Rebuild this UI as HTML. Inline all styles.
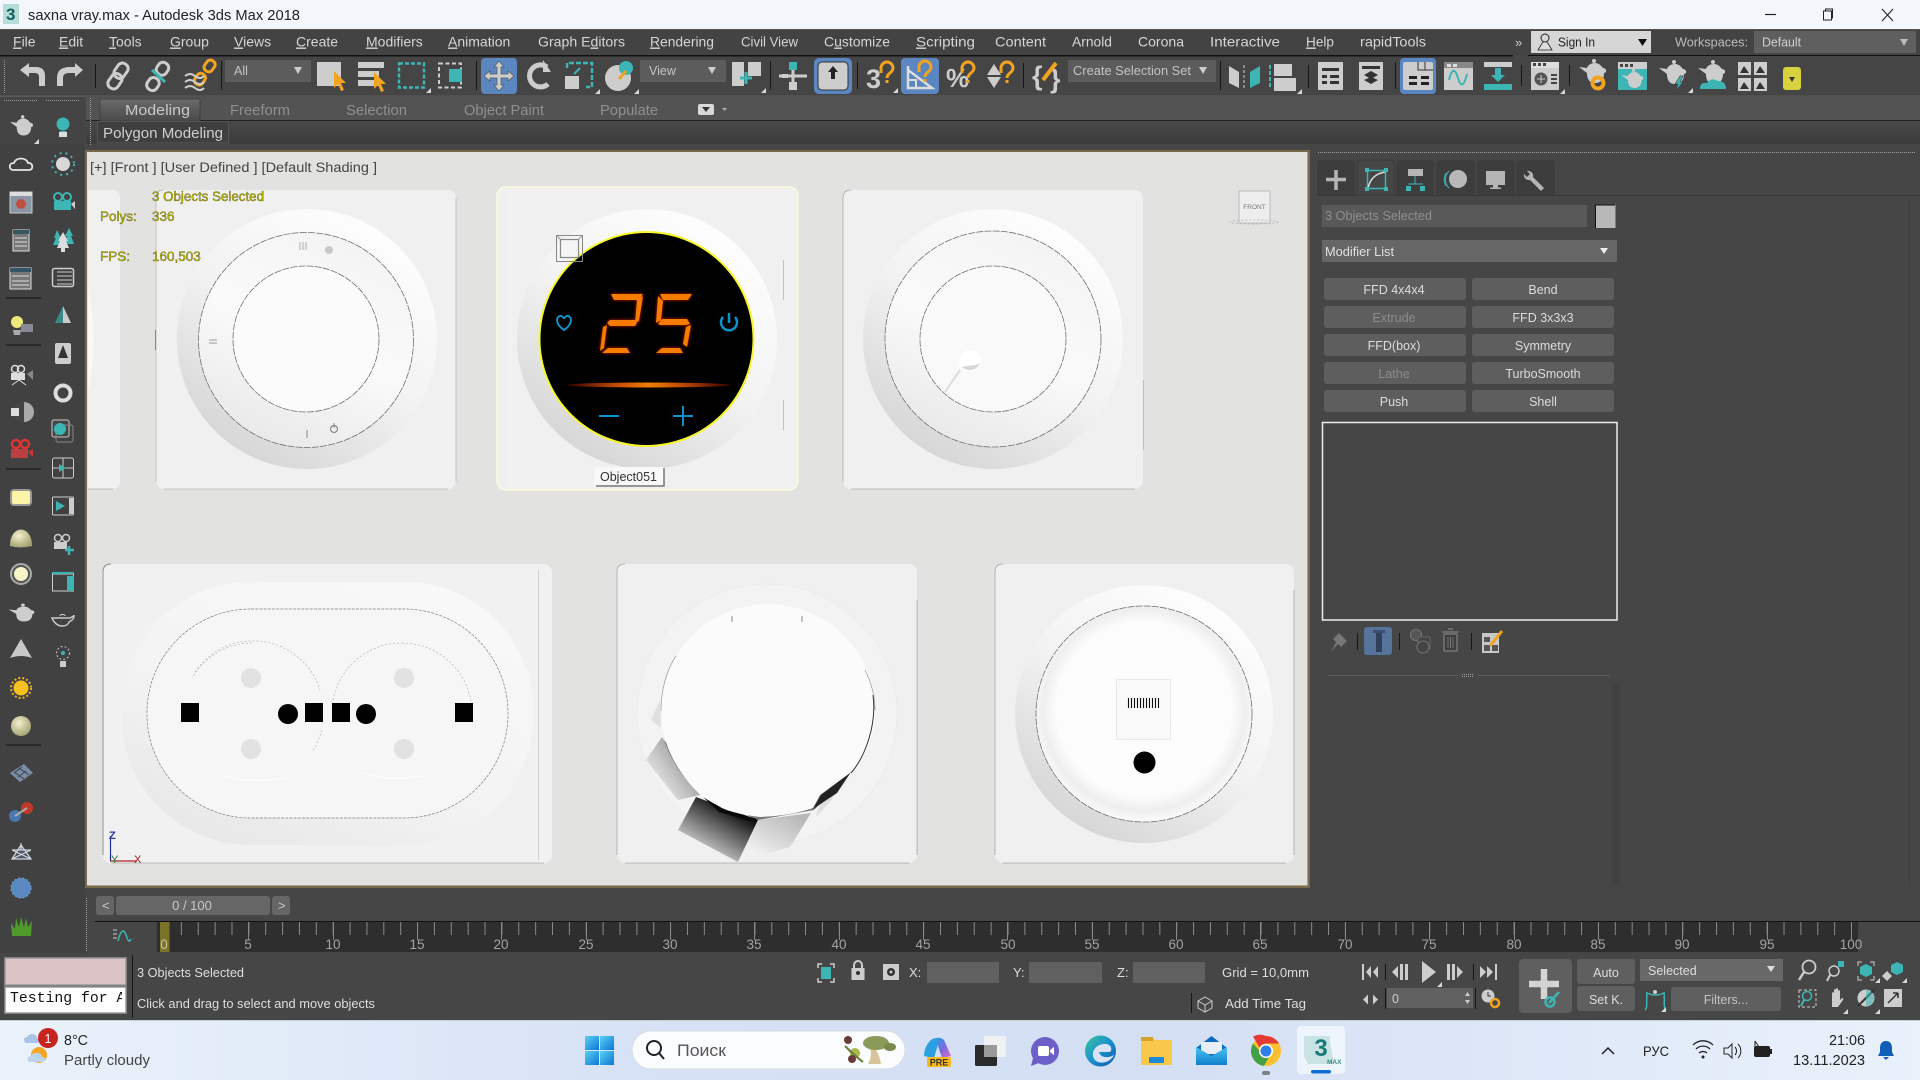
<!DOCTYPE html>
<html lang="en"><head><meta charset="utf-8"><title>saxna vray.max - Autodesk 3ds Max 2018</title>
<style>
html,body{margin:0;padding:0;background:#464646;width:1920px;height:1080px;overflow:hidden}
svg{display:block}
text{font-family:"Liberation Sans","Noto Sans CJK SC",sans-serif;white-space:pre}
.m{font-size:14px;fill:#d6d6d6}
.t{font-size:14.5px;fill:#8f8f8f}
.d{font-size:12.5px;fill:#c4c4c4}
.b{font-size:12.5px;fill:#dcdcdc;text-anchor:middle}
.s{font-size:13px;fill:#dedede}
.k{font-size:13.5px;fill:#a4a4a4;text-anchor:middle}
.st{font-size:13.5px;fill:#c6c600;stroke:#47470a;stroke-width:.35px}
.tb{font-size:14.5px;fill:#333}
.ic{fill:#cdcdcd}.te{fill:#3db5b5}.or{fill:#f2a31f}
.l{fill:none;stroke:#cdcdcd}
.lt{fill:none;stroke:#3db5b5}
.rim{fill:none;stroke:#707070;stroke-width:.8;stroke-dasharray:7 1.200}
.sep{stroke:#161616;stroke-width:1}
</style></head><body>
<svg width="1920" height="1080" viewBox="0 0 1920 1080" xmlns="http://www.w3.org/2000/svg">
<defs>
<linearGradient id="tab" x1="0" y1="0" x2="0" y2="1"><stop offset="0" stop-color="#6a6a6a"/><stop offset="1" stop-color="#4a4a4a"/></linearGradient>
<linearGradient id="rib" x1="0" y1="0" x2="0" y2="1"><stop offset="0" stop-color="#494949"/><stop offset="1" stop-color="#3b3b3b"/></linearGradient>
<linearGradient id="halo" x1=".8" y1=".1" x2=".25" y2=".95"><stop offset="0" stop-color="#fdfdfd"/><stop offset=".5" stop-color="#f2f2f2"/><stop offset="1" stop-color="#d6d6d6"/></linearGradient>
<linearGradient id="halo2" x1=".8" y1=".1" x2=".25" y2=".95"><stop offset="0" stop-color="#f8f8f8"/><stop offset=".6" stop-color="#f3f3f3"/><stop offset="1" stop-color="#e9e9e9"/></linearGradient>
<linearGradient id="knob" x1=".7" y1=".05" x2=".3" y2=".95"><stop offset="0" stop-color="#f4f4f4"/><stop offset=".5" stop-color="#fafafa"/><stop offset="1" stop-color="#eaeaea"/></linearGradient>
<radialGradient id="dish" cx=".5" cy=".48" r=".52"><stop offset="0" stop-color="#fdfdfd"/><stop offset=".78" stop-color="#fcfcfc"/><stop offset=".9" stop-color="#eeeeee"/><stop offset="1" stop-color="#fbfbfb"/></radialGradient>
<linearGradient id="sh1" gradientUnits="userSpaceOnUse" x1="735" y1="806" x2="703" y2="862"><stop offset="0" stop-color="#000"/><stop offset=".3" stop-color="#4a4a4a"/><stop offset="1" stop-color="#f0f0f0"/></linearGradient>
<linearGradient id="sh2" gradientUnits="userSpaceOnUse" x1="790" y1="812" x2="765" y2="858"><stop offset="0" stop-color="#b8b8b8"/><stop offset="1" stop-color="#f0f0f0"/></linearGradient>
<linearGradient id="sh3" gradientUnits="userSpaceOnUse" x1="680" y1="760" x2="648" y2="782"><stop offset="0" stop-color="#a8a8a8"/><stop offset="1" stop-color="#f0f0f0"/></linearGradient>
<linearGradient id="bar" x1="0" y1="0" x2="1" y2="0"><stop offset="0" stop-color="#300"/><stop offset=".3" stop-color="#c04a00"/><stop offset=".5" stop-color="#f08000"/><stop offset=".7" stop-color="#c04a00"/><stop offset="1" stop-color="#300"/></linearGradient>
<linearGradient id="task" x1="0" y1="0" x2="1" y2="0"><stop offset="0" stop-color="#eaf2fb"/><stop offset=".35" stop-color="#d6e1f5"/><stop offset=".6" stop-color="#d4dff4"/><stop offset="1" stop-color="#e9f1fb"/></linearGradient>
<linearGradient id="edge" x1="0" y1="0" x2="1" y2="1"><stop offset="0" stop-color="#3cc89a"/><stop offset=".5" stop-color="#1a90d0"/><stop offset="1" stop-color="#0d5aa8"/></linearGradient>
<linearGradient id="mail" x1="0" y1="0" x2="0" y2="1"><stop offset="0" stop-color="#4cc2ee"/><stop offset="1" stop-color="#0f7fd0"/></linearGradient>
<linearGradient id="win" x1="0" y1="0" x2="1" y2="1"><stop offset="0" stop-color="#5cd0f4"/><stop offset="1" stop-color="#0a78d4"/></linearGradient>
<linearGradient id="cop" x1="0" y1="0" x2="1" y2="1"><stop offset="0" stop-color="#2aa0e0"/><stop offset=".5" stop-color="#7a6ae0"/><stop offset="1" stop-color="#e070c8"/></linearGradient>
<radialGradient id="ball" cx=".4" cy=".35" r=".7"><stop offset="0" stop-color="#f3f0cc"/><stop offset="1" stop-color="#a0a070"/></radialGradient>
<pattern id="ticks" x="164" y="922" width="16.87" height="30" patternUnits="userSpaceOnUse"><line x1=".5" y1="0" x2=".5" y2="13" stroke="#8a8a8a"/></pattern>
<pattern id="dot" width="2" height="2" patternUnits="userSpaceOnUse"><rect width="1" height="1" fill="#a0a0a0"/></pattern>
<filter id="glow" x="-20%" y="-20%" width="140%" height="140%"><feGaussianBlur stdDeviation="1.6"/></filter>
<clipPath id="cl"><rect x="6" y="988" width="116" height="24"/></clipPath>
<g id="cur"><path d="M0 0 L0 17 L4 13 L7 20 L10 19 L7 12 L12 12 Z" class="or"/></g>
<g id="tri"><path d="M0 5 L5 5 L5 0 Z" fill="#d8d8d8"/></g>
<g id="mag"><path d="M-6 2 V-3 A6 6 0 0 1 6 -3 C6 2 0 2 0 7" fill="none" stroke="#f2a31f" stroke-width="3"/><rect x="-1.5" y="9" width="3" height="3" class="or"/></g>
<g id="pot"><path d="M-13 -6 L-5 0 C-5 8 -1 10 3 10 C9 10 12 6 12 0 C15 0 15 -5 11 -5 L10 -6 C8 -9 5 -10 3 -10 C-1 -10 -4 -8 -5 -5 Z" class="ic"/><circle cx="2" cy="-12" r="2" class="ic"/></g>
</defs>

<!-- base -->
<rect width="1920" height="1080" fill="#464646"/>

<!-- title bar -->
<rect width="1920" height="29" fill="#f3f7fc"/>
<rect x="3" y="4" width="16" height="20" fill="#b5dcd8"/>
<text x="6" y="20" font-size="17" font-weight="bold" fill="#14605f">3</text>
<text x="28" y="20" font-size="14.5" fill="#222" textLength="272" lengthAdjust="spacingAndGlyphs">saxna vray.max - Autodesk 3ds Max 2018</text>
<path d="M1765 14.5h11" stroke="#222" stroke-width="1.2"/>
<rect x="1823.5" y="11" width="8" height="9" fill="none" stroke="#222"/><path d="M1825.5 11v-2h7v9h-1" fill="none" stroke="#222"/>
<path d="M1882 9l11 12M1893 9l-11 12" stroke="#222" stroke-width="1.1"/>

<!-- menu bar -->
<rect y="29" width="1920" height="26" fill="#434343"/>
<rect y="29" width="1920" height="1" fill="#555"/>
<rect y="55" width="1513" height="1.5" fill="#111"/>
<rect x="1528" y="55" width="392" height="1" fill="#111"/>
<g>
<text class="m" x="13" y="46.500"><tspan text-decoration="underline">F</tspan>ile</text>
<text class="m" x="59" y="46.500"><tspan text-decoration="underline">E</tspan>dit</text>
<text class="m" x="109" y="46.500"><tspan text-decoration="underline">T</tspan>ools</text>
<text class="m" x="170" y="46.500"><tspan text-decoration="underline">G</tspan>roup</text>
<text class="m" x="234" y="46.500"><tspan text-decoration="underline">V</tspan>iews</text>
<text class="m" x="296" y="46.500"><tspan text-decoration="underline">C</tspan>reate</text>
<text class="m" x="366" y="46.500"><tspan text-decoration="underline">M</tspan>odifiers</text>
<text class="m" x="448" y="46.500"><tspan text-decoration="underline">A</tspan>nimation</text>
<text class="m" x="538" y="46.500" textLength="87" lengthAdjust="spacingAndGlyphs">Graph E<tspan text-decoration="underline">d</tspan>itors</text>
<text class="m" x="650" y="46.500" textLength="64" lengthAdjust="spacingAndGlyphs"><tspan text-decoration="underline">R</tspan>endering</text>
<text class="m" x="741" y="46.500" textLength="57" lengthAdjust="spacingAndGlyphs">Civil View</text>
<text class="m" x="824" y="46.500" textLength="66" lengthAdjust="spacingAndGlyphs">C<tspan text-decoration="underline">u</tspan>stomize</text>
<text class="m" x="916" y="46.500" textLength="59" lengthAdjust="spacingAndGlyphs"><tspan text-decoration="underline">S</tspan>cripting</text>
<text class="m" x="995" y="46.500" textLength="51" lengthAdjust="spacingAndGlyphs">Content</text>
<text class="m" x="1072" y="46.500" textLength="40" lengthAdjust="spacingAndGlyphs">Arnold</text>
<text class="m" x="1138" y="46.500" textLength="46" lengthAdjust="spacingAndGlyphs">Corona</text>
<text class="m" x="1210" y="46.500" textLength="70" lengthAdjust="spacingAndGlyphs">Interactive</text>
<text class="m" x="1306" y="46.500" textLength="28" lengthAdjust="spacingAndGlyphs"><tspan text-decoration="underline">H</tspan>elp</text>
<text class="m" x="1360" y="46.500" textLength="66" lengthAdjust="spacingAndGlyphs">rapidTools</text>
</g>
<text x="1515" y="47" font-size="13" fill="#ccc">»</text>
<rect x="1531" y="31" width="120" height="22" fill="#d6d6d6"/>
<circle cx="1545" cy="38" r="4" fill="none" stroke="#222"/><path d="M1538 50h14l-3-5-2-3h-4l-2 3z" fill="#ddd" stroke="#222" stroke-width=".8"/>
<text x="1558" y="46.500" font-size="12.5" fill="#222" textLength="37" lengthAdjust="spacingAndGlyphs">Sign In</text>
<path d="M1638 39h9l-4.500 7z" fill="#111"/>
<text x="1675" y="46.500" font-size="13" fill="#bdbdbd" textLength="73" lengthAdjust="spacingAndGlyphs">Workspaces:</text>
<rect x="1754" y="31" width="162" height="22" fill="#5f5f5f"/>
<text x="1762" y="46.500" font-size="13" fill="#cfcfcf" textLength="39" lengthAdjust="spacingAndGlyphs">Default</text>
<path d="M1900 39h8l-4 7z" fill="#bbb"/>

<!-- main toolbar -->
<rect x="0" y="57" width="1920" height="39" fill="#454545"/>
<rect x="3" y="60" width="2" height="33" fill="url(#dot)"/>
<rect x="0" y="95.500" width="1920" height="1" fill="#5a5a5a"/>
<path d="M20 70 L29 63 V67 H36 Q45 67 45 76 V86 H39 V77 Q39 73 35 73 H29 V77 Z" class="ic"/>
<path d="M83 70 L75 63 V67 H70 Q57 67 57 78 V86 H63 V78 Q63 73 69 73 H75 V77 Z" class="ic"/>
<line class="sep" x1="95.500" y1="64" x2="95.500" y2="88"/>
<g class="l" stroke-width="3">
<rect x="-6" y="-14" width="11" height="16" rx="5" transform="translate(118 76) rotate(35)"/>
<rect x="-5" y="-2" width="11" height="16" rx="5" transform="translate(118 76) rotate(35)"/>
<rect x="-6" y="-15" width="11" height="13" rx="5" transform="translate(158 76) rotate(35)"/>
<rect x="-5" y="3" width="11" height="13" rx="5" transform="translate(158 76) rotate(35)"/>
</g>
<path d="M152 70 l13 12" stroke="#3db5b5" stroke-width="3"/>
<rect x="-5" y="-13" width="9" height="12" rx="4" transform="translate(206 72) rotate(35)" fill="none" stroke="#f2a31f" stroke-width="3"/>
<rect x="-4" y="0" width="9" height="12" rx="4" transform="translate(203 74) rotate(35)" fill="none" stroke="#f2a31f" stroke-width="3"/>
<path d="M185 76q5-4 10 0t9 0M185 82q5-4 10 0t9 0M185 88q5-4 10 0t9 0" fill="none" stroke="#cdcdcd" stroke-width="2"/>
<line class="sep" x1="221.500" y1="61" x2="221.500" y2="90"/>
<rect x="225" y="60" width="86" height="22" fill="#5c5c5c"/><text class="d" x="234" y="75">All</text><path d="M294 67h8l-4 7z" fill="#ccc"/>
<rect x="317" y="62" width="24" height="24" class="ic"/><use href="#cur" x="334" y="71"/>
<path d="M358 62h26v6h-26zM358 71h21v6h-21zM358 80h21v6h-21z" class="ic"/><use href="#cur" x="374" y="72"/>
<rect x="399" y="63.500" width="25" height="24" class="lt" stroke-width="2.400" stroke-dasharray="4 2"/><use href="#tri" x="426" y="88"/>
<rect x="439" y="63.500" width="22" height="24" class="l" stroke-width="2" stroke-dasharray="4 2.500"/><rect x="449" y="69" width="13" height="13" class="te"/>
<line class="sep" x1="476.500" y1="61" x2="476.500" y2="90"/>
<rect x="481" y="58" width="36" height="36" rx="4" fill="#5b86c0"/>
<path d="M499 61l5 6h-3v7h7v-3l6 5-6 5v-3h-7v7h3l-5 6-5-6h3v-7h-7v3l-6-5 6-5v3h7v-7h-3z" class="ic" stroke="#555" stroke-width=".7"/>
<path d="M547 67 A11 11 0 1 0 548 84" fill="none" stroke="#cdcdcd" stroke-width="5"/><path d="M543 60v12h8z" class="ic"/>
<rect x="565" y="76" width="14" height="13" class="ic"/><path d="M567 68V63H592V87H586" class="lt" stroke-width="2.400" stroke-dasharray="5 2"/><path d="M574 74l6-6" stroke="#3db5b5" stroke-width="2"/><use href="#tri" x="595" y="89"/>
<circle cx="618" cy="78" r="13" class="ic"/><circle cx="626" cy="68" r="7" class="te"/><path d="M619 79l7-8" stroke="#f2a31f" stroke-width="3"/><use href="#tri" x="634" y="89"/>
<rect x="640" y="60" width="86" height="22" fill="#5c5c5c"/><text class="d" x="649" y="75">View</text><path d="M708 67h8l-4 7z" fill="#ccc"/>
<path d="M732 62h12v24h-12zM748 62h13v14h-13z" class="ic"/><path d="M746 72v12M740 78h12" stroke="#3db5b5" stroke-width="3"/><use href="#tri" x="761" y="88"/>
<line class="sep" x1="770.500" y1="61" x2="770.500" y2="90"/>
<path d="M793 63v26M779 76h28" stroke="#cdcdcd" stroke-width="3"/><rect x="789" y="62" width="8" height="8" class="te"/><rect x="789" y="82" width="8" height="8" class="ic"/><rect x="782" y="74" width="6" height="4" class="ic"/>
<rect x="814" y="58" width="38" height="36" rx="5" fill="#5b86c0"/><rect x="818" y="62" width="30" height="28" rx="4" class="ic" stroke="#333"/><path d="M833 66l5 6h-3v7h-4v-7h-3z" fill="#222"/>
<line class="sep" x1="857.500" y1="62" x2="857.500" y2="89"/>
<text x="866" y="88" font-size="27" font-weight="bold" fill="#cdcdcd">3</text><use href="#mag" x="887" y="71"/><use href="#tri" x="893" y="88"/>
<rect x="901" y="58" width="38" height="36" rx="4" fill="#5b86c0"/>
<path d="M908 66V88H932L908 70" fill="none" stroke="#ddd" stroke-width="2.500"/><path d="M908 80h8v8" fill="none" stroke="#ddd" stroke-width="2"/><use href="#mag" x="925" y="70"/>
<text x="946" y="87" font-size="26" font-weight="bold" fill="#cdcdcd">%</text><use href="#mag" x="968" y="71"/>
<path d="M994 64l7 11h-14zM994 88l7-11h-14z" class="ic"/><use href="#mag" x="1007" y="71"/>
<line class="sep" x1="1023.500" y1="63" x2="1023.500" y2="88"/>
<text x="1032" y="85" font-size="27" font-weight="bold" fill="#cdcdcd">{</text><text x="1050" y="88" font-size="27" font-weight="bold" fill="#cdcdcd">}</text><path d="M1043 80l13-17" stroke="#f2a31f" stroke-width="4"/>
<rect x="1068" y="60" width="148" height="22" fill="#5c5c5c"/><text class="d" x="1073" y="75" textLength="118" lengthAdjust="spacingAndGlyphs">Create Selection Set</text><path d="M1199 67h8l-4 7z" fill="#ccc"/>
<line class="sep" x1="1220.500" y1="61" x2="1220.500" y2="90"/>
<path d="M1229 66l10 6v16l-10-5z" class="ic"/><path d="M1260 66l-10 6v16l10-5z" class="te"/><path d="M1244 65v24" stroke="#ccc" stroke-dasharray="3 2"/>
<path d="M1270 65v24" stroke="#3db5b5" stroke-width="2" stroke-dasharray="4 2"/><rect x="1274" y="64" width="18" height="12" class="ic"/><rect x="1274" y="78" width="22" height="13" class="ic"/><use href="#tri" x="1297" y="89"/>
<line class="sep" x1="1308.500" y1="65" x2="1308.500" y2="88"/>
<rect x="1318" y="62" width="25" height="28" class="ic"/><path d="M1322 68h17v3h-17zM1322 75h5v3h-5zM1330 75h9v3h-9zM1322 81h5v3h-5zM1330 81h9v3h-9z" fill="#333"/>
<rect x="1359" y="62" width="24" height="28" class="ic"/><path d="M1362 66h18v3h-18z" fill="#333"/><path d="M1371 71l7 4-7 4-7-4zM1371 77l7 3-7 4-7-4z" fill="#333"/>
<line class="sep" x1="1395.500" y1="62" x2="1395.500" y2="89"/>
<rect x="1400" y="58" width="36" height="36" rx="4" fill="#5b86c0"/><rect x="1403" y="62" width="30" height="28" rx="2" class="ic"/><path d="M1418 62v8h15M1425 62v8" fill="none" stroke="#333"/><path d="M1409 76h8v3h-8zM1421 76h8v3h-8zM1409 82h8v3h-8zM1421 82h8v3h-8z" fill="#222"/>
<rect x="1444" y="62" width="29" height="28" class="ic"/><rect x="1444" y="62" width="29" height="6" fill="#888"/><path d="M1447 64h4v3h-4zM1453 64h4v3h-4z" fill="#ddd"/><path d="M1449 80c3-12 6-12 9-2s6 8 9-4" fill="none" stroke="#3db5b5" stroke-width="2"/>
<rect x="1484" y="62" width="28" height="5" class="ic"/><rect x="1484" y="84" width="28" height="6" class="te"/><path d="M1495 68h6v7h4l-7 7-7-7h4z" class="te"/>
<line class="sep" x1="1521.500" y1="65" x2="1521.500" y2="86"/>
<rect x="1531" y="62" width="28" height="28" class="ic"/><rect x="1531" y="62" width="28" height="6" fill="#ddd"/><path d="M1533 63h3v3h-3zM1538 63h3v3h-3zM1543 63h3v3h-3z" fill="#444"/><circle cx="1541" cy="79" r="6.500" fill="#555"/><path d="M1537 79h8M1541 75v8" stroke="#ccc"/><path d="M1551 74h6v2h-6zM1551 78h6v2h-6zM1551 82h6v2h-6z" fill="#444"/><use href="#tri" x="1560" y="89"/>
<line class="sep" x1="1569.500" y1="65" x2="1569.500" y2="86"/>
<use href="#pot" x="1592" y="73"/><circle cx="1598" cy="83" r="5.500" fill="none" stroke="#f2a31f" stroke-width="4"/>
<rect x="1618" y="62" width="29" height="28" class="te"/><rect x="1618" y="62" width="29" height="7" class="ic"/><path d="M1620 64h3v3h-3zM1625 64h3v3h-3zM1630 64h3v3h-3z" fill="#444"/><use href="#pot" transform="translate(1632 80) scale(.8)"/>
<use href="#pot" x="1672" y="74"/><path d="M1680 76l-5 8h3l-2 7 7-9h-3l3-6z" class="te" stroke="#444" stroke-width=".7"/><use href="#tri" x="1688" y="88"/>
<use href="#pot" x="1711" y="74"/><path d="M1700 89q0-7 7-6 4-6 11-2 8 0 8 8z" class="te"/>
<g class="ic"><rect x="1738" y="62" width="13" height="13"/><rect x="1754" y="62" width="13" height="13"/><rect x="1738" y="78" width="13" height="13"/><rect x="1754" y="78" width="13" height="13"/></g>
<path d="M1740 73l4-7 5 7zM1756 73l4-7 5 7zM1740 89l4-7 5 7zM1756 89l4-7 5 7z" fill="#333"/>
<rect x="1783" y="67" width="18" height="23" rx="3" fill="#d8d23e"/><path d="M1789 77h6l-3 5z" fill="#333"/>

<!-- ribbon -->
<rect x="86" y="96" width="1834" height="24" fill="#535353"/>
<rect x="86" y="120" width="1834" height="1" fill="#222"/>
<rect x="86" y="121" width="1834" height="23" fill="url(#rib)"/>
<rect x="0" y="96" width="85" height="1" fill="#5a5a5a"/>
<rect x="89" y="98" width="2" height="48" fill="url(#dot)"/>
<rect x="100" y="99" width="100" height="22" fill="url(#tab)" stroke="#333" stroke-width=".6"/>
<text class="t" x="125" y="115" style="fill:#c8c8c8" textLength="65" lengthAdjust="spacingAndGlyphs">Modeling</text>
<text class="t" x="230" y="115" textLength="60" lengthAdjust="spacingAndGlyphs">Freeform</text>
<text class="t" x="346" y="115" textLength="61" lengthAdjust="spacingAndGlyphs">Selection</text>
<text class="t" x="464" y="115" textLength="80" lengthAdjust="spacingAndGlyphs">Object Paint</text>
<text class="t" x="600" y="115" textLength="58" lengthAdjust="spacingAndGlyphs">Populate</text>
<rect x="698" y="104" width="16" height="11" rx="2" fill="#d8d8d8"/><path d="M702 107h8l-4 5z" fill="#333"/><path d="M722 108h5l-2.500 3z" fill="#aaa"/>
<rect x="97.500" y="121.500" width="131" height="21.500" fill="#3f3f3f" stroke="#555"/>
<text x="103" y="138" font-size="14.5" fill="#cfcfcf" textLength="120" lengthAdjust="spacingAndGlyphs">Polygon Modeling</text>

<!-- left command icons -->
<rect x="0" y="144" width="85" height="810" fill="#414141"/>
<rect x="0" y="97" width="85" height="47" fill="#444"/>
<rect x="3" y="100" width="34" height="2" fill="url(#dot)"/><rect x="45" y="100" width="34" height="2" fill="url(#dot)"/>
<g>
<use href="#pot" transform="translate(21 127) scale(.85)"/>
<use href="#tri" x="34" y="139"/>
<path d="M13 170c-4 0-5-7 1-7 2-6 12-6 14 0 5-1 6 7 1 7z" fill="none" stroke="#e6e6e6" stroke-width="1.800"/>
<rect x="10" y="192" width="22" height="21" fill="#8a96a6" stroke="#ccc"/><rect x="10" y="192" width="22" height="4" fill="#ddd"/><circle cx="21" cy="204" r="5" fill="#c05040"/>
<rect x="13" y="230" width="16" height="21" fill="#777" stroke="#ddd"/><rect x="13" y="230" width="16" height="4" fill="#356"/><path d="M15 238h12M15 242h12M15 246h12" stroke="#ddd"/>
<rect x="10" y="268" width="21" height="21" fill="#777" stroke="#ddd"/><rect x="10" y="268" width="21" height="4" fill="#356"/><path d="M12 276h17M12 281h17M12 285h17" stroke="#ddd"/>
<rect x="6" y="297.500" width="35" height="1" fill="#111"/>
<circle cx="17" cy="322" r="6" fill="#efe87a"/><path d="M13 330h8l-1 5h-6z" fill="#aaa"/><rect x="21" y="324" width="12" height="8" fill="#889"/>
<rect x="6" y="344.500" width="35" height="1" fill="#111"/>
<circle cx="15" cy="369" r="3.500" fill="none" stroke="#ddd" stroke-width="1.500"/><circle cx="21" cy="369" r="3.500" fill="none" stroke="#ddd" stroke-width="1.500"/><rect x="11" y="373" width="14" height="7" fill="#ddd"/><path d="M27 374l6-4v10z" fill="#888"/><path d="M12 385l7-5 7 5" fill="none" stroke="#ddd"/>
<circle cx="24" cy="412" r="10" fill="#aaa"/><path d="M24 402a10 10 0 0 0 0 20z" fill="#444"/><rect x="11" y="408" width="8" height="8" fill="#ddd"/>
<circle cx="16" cy="444" r="4" fill="none" stroke="#d33" stroke-width="2.500"/><circle cx="25" cy="444" r="4" fill="none" stroke="#d33" stroke-width="2.500"/><rect x="11" y="449" width="17" height="9" fill="#b84040"/><path d="M28 452l5-3v8z" fill="#c33"/>
<rect x="6" y="468.500" width="35" height="1" fill="#111"/>
<rect x="11" y="490" width="20" height="15" rx="3" fill="#fbf4a8" stroke="#999" stroke-width="2"/>
<path d="M10 546c0-22 22-22 22 0q-11 3-22 0z" fill="url(#ball)"/>
<circle cx="21" cy="574" r="10" fill="#555" stroke="#aaa" stroke-width="2"/><circle cx="21" cy="574" r="7" fill="#f7f4c8"/>
<use href="#pot" transform="translate(21 614) scale(.95 .75)"/>
<path d="M10 658l11-19 11 19q-11-4-22 0z" fill="#c8c8c8"/>
<circle cx="21" cy="688" r="7.500" fill="#f5c020"/><circle cx="21" cy="688" r="10" fill="none" stroke="#f0b020" stroke-width="2" stroke-dasharray="2 2"/>
<circle cx="21" cy="726" r="10" fill="url(#ball)"/>
<rect x="6" y="744.500" width="35" height="1" fill="#111"/>
<path d="M10 773l14-9 9 9-13 9z" fill="#7a8da8"/><path d="M14 772l10 7M19 768l10 7M18 777l8-6M14 773l8-6" stroke="#414141"/>
<circle cx="15" cy="816" r="6" fill="#4a78b0"/><circle cx="27" cy="808" r="6" fill="#c03828"/><path d="M15 816l12-8" stroke="#aaa" stroke-width="2"/>
<path d="M12 859l9-14 10 14zM21 843v7M12 850l19 9M31 850l-19 9M12 850h19" fill="#556" stroke="#d0d8e0" stroke-width="1.200"/>
<circle cx="21" cy="888" r="10" fill="#5a88c0" stroke="#7aa0cc" stroke-dasharray="2 2"/>
<path d="M12 936l-1-13 4 6 1-11 3 9 2-10 3 10 2-9 2 9 4-6-1 15z" fill="#4f9a2a"/>
<!-- col2 -->
<circle cx="63" cy="124" r="6.500" class="te"/><path d="M60 131h6v5h-6z" class="te"/><rect x="59" y="132" width="8" height="5" fill="#ddd"/>
<circle cx="63" cy="164" r="7" fill="#d8d8d8"/><circle cx="63" cy="164" r="11" class="lt" stroke-width="2" stroke-dasharray="2 4"/>
<circle cx="58" cy="197" r="4" class="lt" stroke-width="2"/><circle cx="67" cy="197" r="4" class="lt" stroke-width="2"/><rect x="54" y="201" width="17" height="9" class="te"/><path d="M71 204l4-3v8z" fill="#ccc"/>
<path d="M57 230l4 8h-2l3 7h-9l3-7h-2zM69 228l4 8h-2l3 8h-10l3-8h-2z" class="te"/><path d="M63 232l5 9h-2l3 7h-4v4h-4v-4h-4l3-7h-2z" fill="#ddd"/>
<rect x="52.500" y="268.500" width="21" height="18" rx="2" class="l" stroke-width="1.500"/><path d="M57 272h15M57 276h15M57 280h15M57 284h15" stroke="#ccc"/>
<path d="M63 306l-8 17 8 0z" fill="#3a8a88"/><path d="M63 306l8 17h-8z" fill="#ccc"/>
<rect x="55" y="343" width="16" height="21" rx="2" class="ic"/><path d="M63 345l-5 13h10z" fill="#333"/>
<circle cx="63" cy="393" r="7.500" fill="none" stroke="#ddd" stroke-width="4"/>
<rect x="52" y="420" width="17" height="17" rx="2" fill="#444" stroke="#ccc"/><rect x="56" y="425" width="17" height="17" rx="2" fill="none" stroke="#888"/><circle cx="60" cy="429" r="6" class="te"/>
<rect x="52.500" y="458" width="21" height="20" rx="2" class="l"/><path d="M63 458v20M52 468h22" stroke="#ccc"/><path d="M59 464l7 4-7 4z" class="te"/>
<rect x="52.500" y="497" width="21" height="18" rx="1" class="l"/><path d="M56 501v10l9-5z" class="te"/><rect x="69" y="498" width="4" height="16" fill="#ccc"/>
<circle cx="58" cy="538" r="3.500" class="l" stroke-width="1.500"/><circle cx="66" cy="538" r="3.500" class="l" stroke-width="1.500"/><rect x="54" y="542" width="13" height="7" class="ic"/><path d="M69 546v9M65 550h9" stroke="#3db5b5" stroke-width="2.500"/>
<rect x="52.500" y="574" width="21" height="17" class="l"/><rect x="52" y="572" width="22" height="2" class="te"/><rect x="67" y="576" width="7" height="15" class="te"/>
<path d="M52 618h18q4-2 4-3v1c0 3-3 5-5 6-1 3-3 4-7 4s-8-3-10-8z" fill="none" stroke="#ccc" stroke-width="1.500"/><path d="M60 616c0-2 5-2 5 0" stroke="#ccc" fill="none"/>
<circle cx="63" cy="653" r="6.500" fill="none" stroke="#ccc" stroke-dasharray="2 2"/><circle cx="63" cy="653" r="2" class="te"/><path d="M60 661h6v6h-6z" class="ic"/>
</g>

<!-- viewport -->
<rect x="85" y="150" width="1225" height="738" fill="#e2e2e0"/>
<text x="90" y="172" font-size="13.500" fill="#444" textLength="287" lengthAdjust="spacingAndGlyphs">[+] [Front ] [User Defined ] [Default Shading ]</text>

<!-- plate A -->
<path d="M88 190h24q8 0 8 8v283q0 8-8 8H88z" fill="#f0f0f0"/>
<path d="M88 290q12 50 0 100" fill="#f8f8f8"/>
<path d="M88 489h25" stroke="#bbb"/>
<!-- plate B -->
<g>
<rect x="156" y="190" width="300" height="299" rx="8" fill="#f0f0f0"/>
<path d="M156 482V198q0-8 8-8M456 198v284M164 489h284" fill="none" stroke="#b8b8b8" stroke-width=".8"/>
<line x1="155.500" y1="330" x2="155.500" y2="350" stroke="#888"/>
<circle cx="307" cy="339" r="130" fill="url(#halo)"/>
<circle cx="306" cy="340" r="107.500" fill="url(#knob)"/>
<circle cx="306" cy="340" r="107.500" class="rim"/>
<circle cx="306" cy="339" r="73" fill="#fbfbfb"/>
<circle cx="306" cy="339" r="73" class="rim"/>
<path d="M300 242v8M303 242v8M306 242v8" stroke="#aaa"/><circle cx="329" cy="250" r="4" fill="#c8c8c8"/>
<path d="M209 340h8M209 343h8" stroke="#999"/><path d="M307 430v8" stroke="#888"/><circle cx="334" cy="429" r="3.500" fill="none" stroke="#888" stroke-width="1.200"/><path d="M334 423v5" stroke="#888"/>
</g>
<!-- stats -->
<text class="st" x="152" y="201" textLength="112" lengthAdjust="spacingAndGlyphs">3 Objects Selected</text>
<text class="st" x="100" y="221">Polys:</text><text class="st" x="152" y="221">336</text>
<text class="st" x="100" y="261">FPS:</text><text class="st" x="152" y="261">160,503</text>

<!-- plate C -->
<g>
<rect x="497" y="187" width="301" height="303" rx="9" fill="#f0f0f0" stroke="#fdfbd8" stroke-width="1.500"/>
<line x1="510" y1="190" x2="510" y2="488" stroke="#f6f6f6"/>
<line x1="783.500" y1="260" x2="783.500" y2="300" stroke="#c0c0c0"/><line x1="783.500" y1="400" x2="783.500" y2="430" stroke="#c0c0c0"/>
<circle cx="647" cy="339" r="130" fill="url(#halo)"/>
<circle cx="646.500" cy="339" r="107" fill="#000" stroke="#f7f72a" stroke-width="2"/>
<rect x="556.500" y="235.500" width="26" height="26" fill="none" stroke="#888"/><rect x="560.500" y="239.500" width="18" height="18" fill="none" stroke="#888" stroke-width="1.200"/>
<path d="M556.500 235.500l4 4M582.500 235.500l-4 4" stroke="#999"/>
<g>
<g filter="url(#glow)" fill="#c82000">
<path d="M611 294h32l-4 6h-25zM643 296l-4 25-4 2 2-23zM610 320h25l2 3-2 3h-25l-3-3zM607 325l-3 23-4 3 3-24zM602 353h28l-3-5h-19zM660 294h32l-4 6h-25zM658 296l5 5-2 19-5 3zM658 324l4-5h25l3 5-4 1h-26zM691 325l-4 22-4-3 3-17zM656 353h27l-3-5h-18z"/>
</g>
<g fill="#f57c00">
<path d="M611 294h32l-4 6h-25zM643 296l-4 25-4 2 2-23zM610 320h25l2 3-2 3h-25l-3-3zM607 325l-3 23-4 3 3-24zM602 353h28l-3-5h-19zM660 294h32l-4 6h-25zM658 296l5 5-2 19-5 3zM658 324l4-5h25l3 5-4 1h-26zM691 325l-4 22-4-3 3-17zM656 353h27l-3-5h-18z"/>
</g>
</g>
<ellipse cx="649" cy="385" rx="82" ry="2.500" fill="url(#bar)"/>
<path d="M564 330c-9-6-8-13-4-14 2-.5 4 2 4 3 0-1 2-3.500 4-3 4 1 5 8-4 14z" fill="none" stroke="#0b92c8" stroke-width="2"/>
<path d="M729 313v10" stroke="#0b92c8" stroke-width="2.500"/><path d="M723 317a8 8 0 1 0 12 0" fill="none" stroke="#0b92c8" stroke-width="2.500"/>
<path d="M599 416h20" stroke="#0b92c8" stroke-width="2"/>
<path d="M673 416h20M683 406v20" stroke="#0b92c8" stroke-width="2"/>
<rect x="594" y="467" width="70" height="18" fill="#f8f8f8"/>
<path d="M664 468v18h-68" fill="none" stroke="#777" stroke-width="1.500"/>
<text x="600" y="481" font-size="12.500" fill="#333">Object051</text>
</g>

<!-- plate D -->
<g>
<rect x="843" y="190" width="300" height="299" rx="8" fill="#f0f0f0"/>
<path d="M843 482V198q0-8 8-8M851 489h284" fill="none" stroke="#aaa" stroke-width=".8"/>
<line x1="1143.500" y1="380" x2="1143.500" y2="450" stroke="#bbb"/>
<circle cx="993" cy="339" r="130" fill="url(#halo)"/>
<circle cx="993" cy="339" r="108" fill="url(#knob)"/>
<circle cx="993" cy="339" r="108" class="rim"/>
<circle cx="993" cy="339" r="73" fill="#f9f9f9"/>
<circle cx="993" cy="339" r="73" class="rim"/>
<circle cx="970" cy="361" r="11" fill="#fff"/><path d="M962 367a11 11 0 0 0 18-4l-4 2-10 1z" fill="#d8d8d8"/>
<path d="M960 370l-15 22" stroke="#ddd" stroke-width="2"/>
</g>

<!-- viewcube -->
<rect x="1239" y="191" width="31" height="32" fill="#eee" stroke="#bbb"/><text x="1254.500" y="209" font-size="6.500" fill="#777" text-anchor="middle">FRONT</text>
<ellipse cx="1254" cy="222" rx="24" ry="2" fill="none" stroke="#bbb" stroke-dasharray="2 2"/>

<!-- plate E -->
<g>
<rect x="103" y="564" width="449" height="299" rx="8" fill="#f1f1f1"/>
<path d="M103 855V572q0-8 8-8" fill="none" stroke="#888" stroke-width=".9"/><path d="M111 863h433" stroke="#bbb"/>
<line x1="538.500" y1="570" x2="538.500" y2="860" stroke="#d0d0d0"/>
<rect x="122" y="582" width="411" height="263" rx="128" fill="url(#halo2)"/>
<rect x="147" y="609" width="361" height="209" rx="104" fill="#f6f6f6"/>
<rect x="147" y="609" width="361" height="209" rx="104" fill="none" stroke="#808080" stroke-width=".7" stroke-dasharray="3 1.200"/>
<path d="M195 672A70 70 0 0 1 320 690M322 730q-5 15-10 22M402 643a70 70 0 0 1 70 70M333 700a70 70 0 0 1 69-57M252 643a70 70 0 0 0-60 35" fill="none" stroke="#aaa" stroke-width=".6" stroke-dasharray="2 2"/>
<path d="M225 776q25 8 60 2M362 772q20 10 60 4" fill="none" stroke="#fdfdfd" stroke-width="1.200"/>
<circle cx="251" cy="678" r="10" fill="#e2e2e2"/><circle cx="251" cy="749" r="10" fill="#e2e2e2"/><circle cx="404" cy="678" r="10" fill="#e2e2e2"/><circle cx="404" cy="749" r="10" fill="#e2e2e2"/>
<rect x="181" y="703" width="18" height="19"/><rect x="305" y="703" width="18" height="19"/><rect x="332" y="703" width="18" height="19"/><rect x="455" y="703" width="18" height="19"/>
<circle cx="288" cy="714" r="10"/><circle cx="366" cy="714" r="10"/>
</g>
<path d="M110.500 836v25" stroke="#1a2a90" stroke-width="1.200"/><path d="M110 861h27" stroke="#b02020" stroke-width="1.200"/>
<text x="109" y="839" font-size="11" font-weight="bold" fill="#2a3a9a">Z</text>
<text x="134" y="863" font-size="11" fill="#b02020">X</text>
<text x="111" y="863" font-size="11" fill="#208040">Y</text>

<!-- plate F -->
<g>
<rect x="617" y="564" width="300" height="299" rx="8" fill="#f0f0f0"/>
<path d="M617 855V572q0-8 8-8M625 863h284M917 600v255" fill="none" stroke="#a8a8a8" stroke-width=".8"/>
<circle cx="767" cy="714" r="130" fill="#f3f3f3" stroke="#ececec"/>
<path d="M662 737L646 760L678 800L700 795z" fill="url(#sh3)"/>
<path d="M660 700l-9 20 10 8z" fill="#e0e0e0"/>
<path d="M696 797L758 820L738 862L678 830z" fill="url(#sh1)"/>
<path d="M758 820L811 813L790 847L738 862z" fill="url(#sh2)"/>
<path d="M822 795l32-28-22 32-16 18z" fill="#dedede"/>
<path d="M664 740c8 22 18 38 38 56l56 24 56-10 36-36-22 12-70 10-60-14z" fill="#777"/>
<path d="M703 797l20 12 34 10-8 2-30-9z" fill="#0a0a0a"/>
<path d="M813 809l8-14 30-23-14 21z" fill="#222"/>
<path d="M661 711C661 652 709 604 768 604S875 652 875 711C875 740 864 758 850 773L820 795L813 808Q790 816 760 817Q735 814 722 808L703 797C685 782 661 750 661 711z" fill="#fbfbfb"/>
<path d="M873 695c4 30-8 62-22 78" fill="none" stroke="#333" stroke-width="1"/>
<path d="M661 711c0-20 5-40 15-55M865 670q10 20 10 40" fill="none" stroke="#999" stroke-width=".7"/>
<path d="M732 616v6M802 616v6" stroke="#888"/>
</g>

<!-- plate G -->
<g>
<rect x="995" y="564" width="299" height="299" rx="8" fill="#f0f0f0"/>
<path d="M995 855V572q0-8 8-8M1003 863h283M1294 590v265" fill="none" stroke="#a8a8a8" stroke-width=".8"/>
<circle cx="1144" cy="714" r="129" fill="url(#halo)"/>
<circle cx="1144" cy="714" r="108" fill="url(#dish)"/>
<circle cx="1144" cy="714" r="108" class="rim"/>
<rect x="1116.500" y="679.500" width="54" height="60" fill="#f9f9f9" stroke="#e8e8e8"/>
<path d="M1128.500 698v10M1131.500 698v10M1134.500 698v10M1137.500 698v10M1140.500 698v10M1143.500 698v10M1146.500 698v10M1149.500 698v10M1152.500 698v10M1155.500 698v10M1158.500 698v10" stroke="#111" stroke-width="1.100"/>
<circle cx="1144.500" cy="762.500" r="11"/>
</g>
<rect x="85" y="150" width="2" height="738" fill="#77694a"/><rect x="1307.500" y="150" width="2.500" height="738" fill="#77694a"/>
<rect x="85" y="885.500" width="1225" height="2.500" fill="#77694a"/><rect x="85" y="150" width="1225" height="2" fill="#77694a"/>

<!-- right panel -->
<rect x="1310" y="146" width="610" height="744" fill="#464646"/>
<rect x="1318" y="152" width="598" height="2" fill="url(#dot)"/>
<g fill="#3d3d3d"><path d="M1317 195v-31q0-4 4-4h30q4 0 4 4v31zM1396 195v-31q0-4 4-4h30q4 0 4 4v31zM1436 195v-31q0-4 4-4h31q4 0 4 4v31zM1477 195v-31q0-4 4-4h30q4 0 4 4v31zM1516 195v-31q0-4 4-4h31q4 0 4 4v31z"/></g>
<path d="M1357 195v-31q0-4 4-4h29q4 0 4 4v31z" fill="#464646" stroke="#3a3a3a"/>
<rect x="1394" y="195" width="526" height="1" fill="#383838"/><rect x="1317" y="195" width="40" height="1" fill="#383838"/>
<path d="M1336 170v20M1326 179.500h20" stroke="#b5b5b5" stroke-width="3.500"/>
<rect x="1367.500" y="170.500" width="18" height="18" class="lt" stroke-width="1.500"/><path d="M1368 188c2-8 6-14 17-16" fill="none" stroke="#ddd" stroke-width="1.500"/>
<g class="te"><rect x="1365" y="168" width="4" height="4"/><rect x="1384" y="168" width="4" height="4"/><rect x="1365" y="187" width="4" height="4"/><rect x="1384" y="187" width="4" height="4"/></g>
<rect x="1408" y="169" width="15" height="7" fill="#b5b5b5"/><path d="M1415 176v8M1408 184h15" fill="none" stroke="#3db5b5"/><rect x="1406" y="186" width="5" height="5" class="te"/><rect x="1420" y="186" width="5" height="5" class="te"/>
<circle cx="1458" cy="179" r="9" fill="#b8b8b8"/><path d="M1449 171a12 12 0 0 0 0 17M1446 173a13 13 0 0 0 0 13" class="lt"/>
<rect x="1486" y="171" width="19" height="14" fill="#b5b5b5"/><path d="M1490 189h11v-1.500h-3v-3h-5v3h-3z" fill="#b5b5b5"/>
<path d="M1527 171a5 5 0 0 1 6 6l11 11-3 3-11-11a5 5 0 0 1-6-6l3 3 3-3z" fill="#b5b5b5"/>
<rect x="1322" y="205" width="265" height="22" fill="#595959"/>
<text x="1325" y="220" font-size="13" fill="#8f8f8f" textLength="107" lengthAdjust="spacingAndGlyphs">3 Objects Selected</text>
<rect x="1595" y="204.500" width="20.500" height="23.500" fill="#b8b8b8"/><path d="M1595.500 228V205H1615" fill="none" stroke="#111"/>
<rect x="1322" y="240" width="295" height="22" fill="#666"/>
<text x="1325" y="256" font-size="13" fill="#e0e0e0" textLength="69" lengthAdjust="spacingAndGlyphs">Modifier List</text>
<path d="M1600 248h8l-4 6z" fill="#eee"/>
<g fill="#5e5e5e">
<rect x="1324" y="278" width="142" height="22" rx="3"/><rect x="1472" y="278" width="142" height="22" rx="3"/>
<rect x="1324" y="306" width="142" height="22" rx="3"/><rect x="1472" y="306" width="142" height="22" rx="3"/>
<rect x="1324" y="334" width="142" height="22" rx="3"/><rect x="1472" y="334" width="142" height="22" rx="3"/>
<rect x="1324" y="362" width="142" height="22" rx="3"/><rect x="1472" y="362" width="142" height="22" rx="3"/>
<rect x="1324" y="390" width="142" height="22" rx="3"/><rect x="1472" y="390" width="142" height="22" rx="3"/>
</g>
<text class="b" x="1394" y="294">FFD 4x4x4</text><text class="b" x="1543" y="294">Bend</text>
<text class="b" x="1394" y="322" style="fill:#8c8c8c">Extrude</text><text class="b" x="1543" y="322">FFD 3x3x3</text>
<text class="b" x="1394" y="350">FFD(box)</text><text class="b" x="1543" y="350">Symmetry</text>
<text class="b" x="1394" y="378" style="fill:#8c8c8c">Lathe</text><text class="b" x="1543" y="378">TurboSmooth</text>
<text class="b" x="1394" y="406">Push</text><text class="b" x="1543" y="406">Shell</text>
<rect x="1322.500" y="422.500" width="294.500" height="197.500" fill="none" stroke="#eee" stroke-width="1.500"/>
<path d="M1331 652l5-10-3-3 6-6 8 8-6 6-3-3z" fill="#777"/>
<line class="sep" x1="1357.500" y1="633" x2="1357.500" y2="650"/>
<rect x="1364" y="627" width="28" height="28" rx="3" fill="#56739c"/><rect x="1376" y="632" width="6" height="20" fill="#2f405a"/><rect x="1373" y="630" width="12" height="3" fill="#3a506e"/>
<line class="sep" x1="1399.500" y1="633" x2="1399.500" y2="650"/>
<circle cx="1416" cy="635" r="5.500" fill="#555" stroke="#777"/><rect x="1418" y="637" width="12" height="12" fill="#444" stroke="#666"/><circle cx="1423" cy="647" r="6" fill="#444" stroke="#777"/>
<rect x="1444" y="634" width="13" height="17" rx="1" fill="#3e3e3e" stroke="#777" stroke-width="1.500"/><path d="M1442 632h17M1448 629h5" stroke="#777" stroke-width="1.500"/><path d="M1448 637v11M1450.500 637v11M1453 637v11" stroke="#777"/>
<line class="sep" x1="1471.500" y1="633" x2="1471.500" y2="650"/>
<rect x="1482" y="633" width="17" height="20" fill="#c8c8c8"/><path d="M1484 637h6v5h-6zM1484 645h6v6h-6zM1492 645h6v6h-6z" fill="#555"/><path d="M1490 646l12-15" stroke="#f2a31f" stroke-width="3"/>
<path d="M1328 675.500h130M1478 675.500h132" stroke="#5c5c5c"/><rect x="1462" y="674" width="12" height="3" fill="url(#dot)"/>
<rect x="1612" y="682" width="8" height="204" fill="#424242"/>
<rect x="1909" y="196" width="1" height="690" fill="#3f3f3f"/>

<!-- time slider -->
<rect x="85" y="889" width="1835" height="64" fill="#464646"/>
<rect x="86" y="897" width="2" height="54" fill="url(#dot)"/>
<rect x="96" y="896" width="18" height="19" rx="3" fill="#666"/><rect x="116" y="896" width="154" height="19" rx="3" fill="#666"/><rect x="272" y="896" width="18" height="19" rx="3" fill="#666"/>
<text x="102" y="910" font-size="13" fill="#c8c8c8">&lt;</text><text x="278" y="910" font-size="13" fill="#c8c8c8">&gt;</text>
<text x="192" y="910" font-size="13" fill="#c8c8c8" text-anchor="middle">0 / 100</text>
<rect x="95" y="921" width="1825" height="1" fill="#111"/>
<rect x="157" y="922" width="1701" height="30" fill="#2e2e2e"/>
<rect x="164" y="922" width="1688" height="13" fill="url(#ticks)"/>
<path d="M248.500 922v18M333.500 922v18M417.500 922v18M501.500 922v18M586.500 922v18M670.500 922v18M754.500 922v18M839.500 922v18M923.500 922v18M1007.500 922v18M1092.500 922v18M1176.500 922v18M1260.500 922v18M1345.500 922v18M1429.500 922v18M1514.500 922v18M1598.500 922v18M1682.500 922v18M1767.500 922v18M1851.500 922v18" stroke="#8a8a8a"/>
<rect x="160" y="922" width="9.500" height="30" fill="#7a742b"/>
<path d="M113 930h4M113 934h4M113 938h4" stroke="#ccc"/><path d="M118 941c3-12 6-12 8-6s3 8 5 4" class="lt" stroke-width="1.500"/>
<g>
<text class="k" x="164" y="949" style="fill:#c8c49a">0</text><text class="k" x="248" y="949">5</text><text class="k" x="333" y="949">10</text><text class="k" x="417" y="949">15</text><text class="k" x="501" y="949">20</text><text class="k" x="586" y="949">25</text><text class="k" x="670" y="949">30</text><text class="k" x="754" y="949">35</text><text class="k" x="839" y="949">40</text><text class="k" x="923" y="949">45</text><text class="k" x="1008" y="949">50</text><text class="k" x="1092" y="949">55</text><text class="k" x="1176" y="949">60</text><text class="k" x="1260" y="949">65</text><text class="k" x="1345" y="949">70</text><text class="k" x="1429" y="949">75</text><text class="k" x="1514" y="949">80</text><text class="k" x="1598" y="949">85</text><text class="k" x="1682" y="949">90</text><text class="k" x="1767" y="949">95</text><text class="k" x="1851" y="949">100</text>
</g>

<!-- status -->
<rect y="953" width="1920" height="67" fill="#464646"/>
<rect x="5" y="958" width="121" height="27" fill="#dcc4c6" stroke="#999" stroke-width="1.500"/>
<rect x="5" y="987" width="121" height="26" fill="#fff" stroke="#999" stroke-width="1.500"/>
<text x="10" y="1002" font-size="14.800" fill="#111" clip-path="url(#cl)" style="font-family:'Liberation Mono',monospace">Testing for A</text>
<line class="sep" x1="132.500" y1="955" x2="132.500" y2="1018"/>
<text class="s" x="137" y="977" textLength="107" lengthAdjust="spacingAndGlyphs">3 Objects Selected</text>
<text class="s" x="137" y="1008" textLength="238" lengthAdjust="spacingAndGlyphs">Click and drag to select and move objects</text>
<path d="M818 968v-4h4M830 964h4v4M834 978v4h-4M822 982h-4v-4" class="l" stroke="#ddd" stroke-width="1.500"/><rect x="821" y="967" width="10" height="12" class="te"/>
<path d="M854 968v-3a4 4 0 0 1 8 0v3" fill="none" stroke="#ccc" stroke-width="2"/><rect x="851.500" y="968" width="13" height="12" class="ic"/><circle cx="858" cy="973" r="2" fill="#333"/>
<rect x="883" y="964" width="16" height="16" class="ic"/><circle cx="891" cy="972" r="4" fill="#333"/><circle cx="891" cy="972" r="1.500" fill="#ccc"/>
<text class="s" x="909" y="977">X:</text><rect x="927" y="962" width="72" height="21" fill="#606060"/>
<text class="s" x="1013" y="977">Y:</text><rect x="1029" y="962" width="73" height="21" fill="#606060"/>
<text class="s" x="1117" y="977">Z:</text><rect x="1133" y="962" width="72" height="21" fill="#606060"/>
<text class="s" x="1222" y="977" textLength="87" lengthAdjust="spacingAndGlyphs">Grid = 10,0mm</text>
<line class="sep" x1="1191.500" y1="993" x2="1191.500" y2="1013"/>
<path d="M1205 997l7 4v7l-7 4-7-4v-7zM1198 1001l7 4 7-4M1205 1005v7" class="l"/>
<text class="s" x="1225" y="1008" textLength="81" lengthAdjust="spacingAndGlyphs">Add Time Tag</text>
<path d="M1362 964h2v16h-2zM1366 972l5-6v12zM1373 972l5-6v12z" class="ic"/>
<line class="sep" x1="1385.500" y1="964" x2="1385.500" y2="980"/>
<path d="M1392 972l6-6v12zM1400 964h3v16h-3zM1405 964h3v16h-3z" class="ic"/>
<path d="M1422 961l14 11-14 11z" class="ic"/><use href="#tri" x="1437" y="982"/>
<path d="M1447 964h3v16h-3zM1452 964h3v16h-3zM1457 966l6 6-6 6z" class="ic"/>
<line class="sep" x1="1473.500" y1="964" x2="1473.500" y2="980"/>
<path d="M1480 966l6 6-6 6zM1487 966l6 6-6 6zM1495 964h2v16h-2z" class="ic"/>
<path d="M1363 999.500l5-5v10zM1378 999.500l-5-5v10z" class="ic"/>
<line class="sep" x1="1385.500" y1="988" x2="1385.500" y2="1009"/>
<rect x="1387" y="988" width="86" height="20" fill="#606060"/>
<text x="1392" y="1003" font-size="12.500" fill="#ccc">0</text><path d="M1465 996l2.500-4 2.500 4zM1465 1000l2.500 4 2.500-4z" fill="#ccc"/>
<line class="sep" x1="1475.500" y1="988" x2="1475.500" y2="1009"/>
<circle cx="1488" cy="996" r="6.500" class="ic"/><path d="M1488 992v4h3" stroke="#333" fill="none"/><circle cx="1495" cy="1003" r="4" fill="none" stroke="#f2a31f" stroke-width="2.500"/>
<rect x="1519" y="959" width="53" height="54" rx="4" fill="#5f5f5f"/>
<path d="M1544 969v30M1529 984h30" stroke="#d4d4d4" stroke-width="6.500"/><path d="M1549 1003l10-11" stroke="#3db5b5" stroke-width="2.500"/><circle cx="1550" cy="1002" r="4.500" fill="none" stroke="#3db5b5" stroke-width="2.500"/>
<rect x="1577" y="959" width="58" height="25" rx="3" fill="#5f5f5f"/><text class="b" x="1606" y="977">Auto</text>
<rect x="1577" y="986" width="58" height="25" rx="3" fill="#5f5f5f"/><text class="b" x="1606" y="1004">Set K.</text>
<rect x="1640" y="959" width="143" height="22" fill="#686868"/><text x="1648" y="975" font-size="12.500" fill="#dedede">Selected</text><path d="M1767 966h8l-4 6z" fill="#ddd"/>
<path d="M1647 992c-1 10 1 15-2 18M1664 992c1 10-1 15 2 18M1647 993q8 4 17 0" class="lt" stroke-width="1.500"/><circle cx="1655" cy="992" r="2" class="ic"/><use href="#tri" x="1661" y="1007"/>
<rect x="1671" y="987" width="110" height="24" rx="3" fill="#5f5f5f"/><text class="b" x="1726" y="1004" style="fill:#c4c4c4">Filters...</text>
<circle cx="1809" cy="967" r="6.500" fill="none" stroke="#ccc" stroke-width="1.800"/><path d="M1804 972l-5 8" stroke="#ccc" stroke-width="2.500"/>
<circle cx="1834" cy="971" r="5" class="l" stroke-width="1.500"/><path d="M1830 975l-3 6" stroke="#ccc" stroke-width="2"/><rect x="1838" y="961" width="6" height="6" class="te"/>
<path d="M1858 966v-4h4M1870 962h4v4M1874 976v4h-4M1862 980h-4v-4" class="l"/><path d="M1866 964l6 3v7l-6 3-6-3v-7z" class="te"/><use href="#tri" x="1875" y="978"/>
<path d="M1897 962l6 3v7l-6 3-6-3v-7z" class="te"/><path d="M1887 971l5 5-5 5-5-5z" class="ic"/><use href="#tri" x="1902" y="978"/>
<rect x="1799" y="990" width="17" height="17" class="l" stroke-dasharray="3 2"/><circle cx="1807" cy="996" r="4.500" class="lt" stroke-width="1.500"/><path d="M1804 1000l-3 6" stroke="#3db5b5" stroke-width="2"/>
<path d="M1832 1002v-9q1-2 2 0v5-8q1-2 2 0v8-9q1-2 2 0v9-7q1-2 2 0v9l2-2q2 0 1 2l-5 7h-6z" class="ic"/><use href="#tri" x="1843" y="1009"/>
<circle cx="1866" cy="998" r="8.500" class="ic"/><path d="M1858 1006l16-16" stroke="#333" stroke-width="2"/><path d="M1866 990a8 8 0 0 1 0 16z" class="te" opacity=".6"/><use href="#tri" x="1875" y="1009"/>
<rect x="1884" y="989" width="18" height="18" class="ic"/><path d="M1888 1003l10-10M1898 993h-5M1898 993v5" stroke="#333" stroke-width="1.500"/>

<!-- taskbar -->
<rect y="1020" width="1920" height="60" fill="url(#task)"/>
<rect y="1020" width="1920" height="1" fill="#c9ced6"/>
<path d="M27 1043c-4 0-4-6 0-6 2-4 10-4 10 1 3 0 3 5 0 5z" fill="#a9c4e6"/>
<circle cx="39" cy="1055" r="8" fill="#f6a623"/><path d="M30 1062c-4 0-3-6 1-6 2-5 11-4 11 1 4 0 4 5 0 5z" fill="#bcd4ee"/>
<circle cx="48" cy="1038" r="10" fill="#c8231e"/><text x="48" y="1043" font-size="13" fill="#fff" text-anchor="middle">1</text>
<text x="64" y="1045" font-size="14.500" fill="#222" textLength="24" lengthAdjust="spacingAndGlyphs">8°C</text>
<text x="64" y="1065" font-size="14.500" fill="#444" textLength="86" lengthAdjust="spacingAndGlyphs">Partly cloudy</text>
<g fill="url(#win)"><rect x="585" y="1036" width="14" height="14"/><rect x="600" y="1036" width="14" height="14"/><rect x="585" y="1051" width="14" height="14"/><rect x="600" y="1051" width="14" height="14"/></g>
<rect x="632" y="1031" width="273" height="38" rx="19" fill="#fbfcfe" stroke="#d6dbe6"/>
<circle cx="654" cy="1048" r="7" fill="none" stroke="#222" stroke-width="2"/><path d="M659 1053l5 6" stroke="#222" stroke-width="2"/>
<text x="677" y="1056" font-size="17" fill="#555" textLength="49" lengthAdjust="spacingAndGlyphs">Поиск</text>
<path d="M868 1064c4-8 4-14 0-18l5-1c4 6 7 12 8 19z" fill="#d8c49a"/><ellipse cx="876" cy="1043" rx="13" ry="7" fill="#8a9a5a"/><ellipse cx="890" cy="1047" rx="6" ry="4" fill="#7a8a4a"/>
<circle cx="848" cy="1040" r="4" fill="#6a3a3a"/><circle cx="855" cy="1053" r="5" fill="#a8b84a"/><circle cx="852" cy="1059" r="4" fill="#6a3a3a"/><path d="M845 1046q10 10 18 16" stroke="#6a7a3a" stroke-width="2" fill="none"/>
<path d="M924 1056q0-8 5-14 3-4 8-4h3l-6 20z" fill="#2aa0e0"/><path d="M936 1038q5-1 8 2l7 16-9 2-4-12z" fill="url(#cop)"/>
<rect x="927" y="1057" width="24" height="10" rx="2" fill="#f8b820"/><text x="939" y="1065.500" font-size="9" font-weight="bold" fill="#333" text-anchor="middle">PRE</text>
<rect x="975" y="1045" width="22" height="21" rx="1.500" fill="#2a2a2a"/><rect x="984" y="1036" width="22" height="21" rx="1.500" fill="#f3f3f3" fill-opacity=".9"/><rect x="984" y="1045" width="13" height="12" fill="#999"/>
<circle cx="1045" cy="1051" r="14" fill="#6d5fc8"/><path d="M1033 1058l-2 8 8-3z" fill="#6d5fc8"/><rect x="1038" y="1046" width="11" height="10" rx="2" fill="#fff"/><path d="M1050 1050l4-3v8l-4-3z" fill="#fff"/>
<circle cx="1100.500" cy="1051" r="15.500" fill="url(#edge)"/><path d="M1103 1044c8-1 10 5 7 8h-11c1 5 8 7 15 3-3 6-10 9-16 7-8-3-7-16 5-18z" fill="#d8e4f6"/>
<path d="M1141 1037h11l3 3h17v25h-31z" fill="#f7c84a"/><rect x="1141" y="1037" width="12" height="4" fill="#d8a028"/><rect x="1149" y="1057" width="15" height="6" rx="1" fill="#1e88d8"/>
<path d="M1196 1048l15.500-12 15.500 12v17h-31z" fill="#0f6cbd"/><path d="M1201 1042h21v12h-21z" fill="#e8eef6"/><path d="M1196 1047l15.500 9 15.500-9v18h-31z" fill="url(#mail)"/>
<circle cx="1266" cy="1051" r="15" fill="#fbc02d"/><path d="M1266 1036a15 15 0 0 1 13 7.500h-13a7.500 7.500 0 0 0-6.500 4l-6.500-11a15 15 0 0 1 13-0.500z" fill="#e53935"/><path d="M1253 1043.500a15 15 0 0 0 11 22.400l6.500-11.400h-4.500a7.500 7.500 0 0 1-6.500-4z" fill="#43a047"/><circle cx="1266" cy="1051" r="7" fill="#fff"/><circle cx="1266" cy="1051" r="5.500" fill="#2f7de8"/>
<rect x="1262" y="1071" width="8" height="4" rx="2" fill="#7d8288"/>
<rect x="1297" y="1026" width="48" height="48" rx="4" fill="#eef4fb"/>
<path d="M1304 1036h26v6l4 22h-26l-4-8z" fill="#b8dcd8" opacity=".7"/>
<text x="1321" y="1056" font-size="24" font-weight="bold" fill="#187a78" text-anchor="middle">3</text>
<text x="1327" y="1064" font-size="6.500" fill="#3a8a88" font-weight="bold">MAX</text>
<rect x="1311" y="1070" width="20" height="3.500" rx="1.700" fill="#0f6fd0"/>
<path d="M1602 1054l6-6 6 6" fill="none" stroke="#222" stroke-width="1.500"/>
<text x="1643" y="1056" font-size="14" fill="#222" textLength="26" lengthAdjust="spacingAndGlyphs">РУС</text>
<path d="M1693 1045a14 14 0 0 1 20 0M1696 1049a10 10 0 0 1 14 0M1699 1053a6 6 0 0 1 8 0" fill="none" stroke="#222" stroke-width="1.300"/><circle cx="1703" cy="1057" r="1.500" fill="#222"/>
<path d="M1724 1048h4l4-4v14l-4-4h-4z" fill="none" stroke="#222"/><path d="M1735 1047a6 6 0 0 1 0 8M1738 1044a10 10 0 0 1 0 14" fill="none" stroke="#222"/>
<rect x="1754" y="1046" width="16" height="11" rx="2" fill="#222"/><rect x="1770" y="1049" width="2" height="5" fill="#222"/><path d="M1755 1041l4 6M1755 1041v6" stroke="#222"/>
<text x="1865" y="1045" font-size="14.500" fill="#222" text-anchor="end" textLength="36" lengthAdjust="spacingAndGlyphs">21:06</text>
<text x="1865" y="1065" font-size="14.500" fill="#222" text-anchor="end" textLength="72" lengthAdjust="spacingAndGlyphs">13.11.2023</text>
<path d="M1886 1041c-4 0-6 3-6 7v4l-2 4h16l-2-4v-4c0-4-2-7-6-7z" fill="#0f5fb8"/><path d="M1883 1057h6l-3 3z" fill="#0f5fb8"/>
</svg>
</body></html>
